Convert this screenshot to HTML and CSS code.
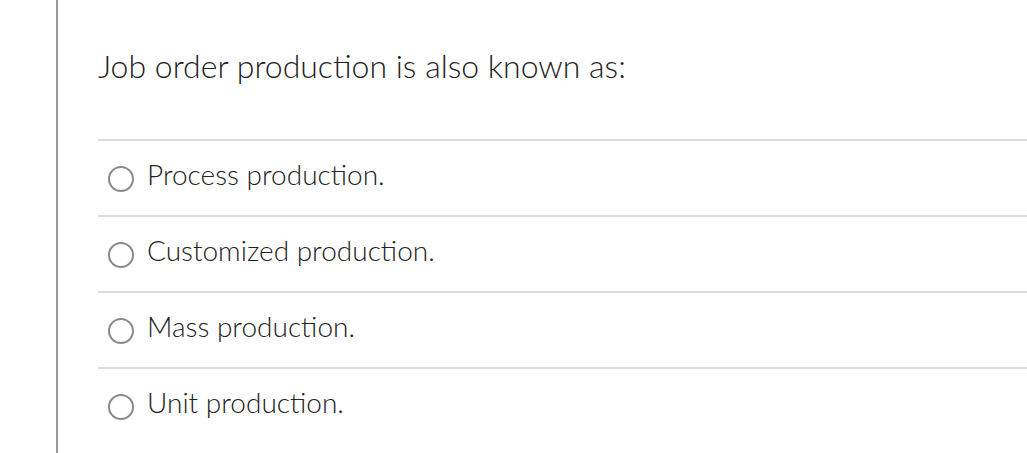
FILE: index.html
```html
<!DOCTYPE html>
<html>
<head>
<meta charset="utf-8">
<link rel="stylesheet" href="styles.css">
</head>
<body>
<div class="page">
  <div class="rule"></div>
  <div class="question">
    <h1 class="prompt">Job order production is also known as:</h1>
    <ul class="options">
      <li class="option"><span class="radio"></span><span class="label">Process production.</span></li>
      <li class="option"><span class="radio"></span><span class="label">Customized production.</span></li>
      <li class="option"><span class="radio"></span><span class="label">Mass production.</span></li>
      <li class="option"><span class="radio"></span><span class="label">Unit production.</span></li>
    </ul>
  </div>
</div>
</body>
</html>
```
FILE: styles.css
```css
html, body {
  margin: 0;
  padding: 0;
  background: #fff;
}
body {
  font-family: Lato, "Open Sans", sans-serif;
  color: #222;
  overflow: hidden;
}
.page {
  display: flex;
  height: 453px;
  padding-left: 56px;
}
.rule {
  width: 2px;
  background: #9a9a9a;
  flex: none;
}
.question {
  flex: 1;
  padding-left: 40px;
}
.prompt {
  margin: 0;
  padding-top: 46px;
  height: 139px;
  box-sizing: border-box;
  font-size: 32px;
  font-weight: 300;
  line-height: 40px;
  color: #222;
}
.options {
  list-style: none;
  margin: 0;
  padding: 0;
}
.option {
  display: flex;
  align-items: center;
  height: 74px;
  border-top: 2px solid #dcdcdc;
  padding-left: 10px;
}
.radio {
  width: 22px;
  height: 22px;
  border: 2.5px solid #8a8a8a;
  border-radius: 50%;
  flex: none;
  margin-top: 2px;
}
.label {
  margin-left: 13px;
  margin-bottom: 8px;
  font-size: 28px;
  font-weight: 300;
  color: #222;
}
```
